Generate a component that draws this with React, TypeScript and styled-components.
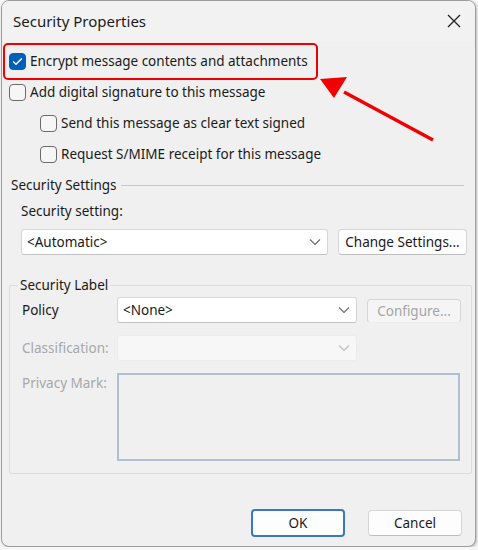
import React from 'react'
import styled, { createGlobalStyle } from 'styled-components'

const GlobalStyle = createGlobalStyle`
  html, body {
    margin: 0;
    padding: 0;
    background: #f7f7f7;
  }
  body {
    font-family: 'Noto Sans', 'Open Sans', sans-serif;
    font-size: 13.5px;
    color: #1a1a1a;
  }
`

const Chevron = () => (
  <svg width="12" height="8" viewBox="0 0 12 8">
    <path d="M1 1.5 L6 6.5 L11 1.5" fill="none" stroke="currentColor" strokeWidth="1.1" />
  </svg>
)

const Check = () => (
  <svg width="11" height="9" viewBox="0 0 11 9">
    <path d="M1.2 4.6 L4 7.3 L9.8 1.4" fill="none" stroke="#fff" strokeWidth="1.4" />
  </svg>
)

interface CheckRowProps {
  label: string
  checked?: boolean
  indent?: boolean
  highlighted?: boolean
}

const CheckRow: React.FC<CheckRowProps> = ({ label, checked, indent, highlighted }) => (
  <Row $indent={indent} $highlighted={highlighted}>
    <Box $checked={checked}>{checked && <Check />}</Box>
    <span>{label}</span>
  </Row>
)

const App: React.FC = () => {
  return (
    <>
      <GlobalStyle />
      <Window>
        <TitleBar>
          <Title>Security Properties</Title>
          <Close>
            <svg width="14" height="14" viewBox="0 0 14 14">
              <path d="M1 1 L13 13 M13 1 L1 13" stroke="#222" strokeWidth="1.3" />
            </svg>
          </Close>
        </TitleBar>
        <Body>
          <Checks>
            <CheckRow label="Encrypt message contents and attachments" checked highlighted />
            <CheckRow label="Add digital signature to this message" />
            <CheckRow label="Send this message as clear text signed" indent />
            <CheckRow label="Request S/MIME receipt for this message" indent />
          </Checks>

          <SectionHeader>
            <span>Security Settings</span>
            <Rule />
          </SectionHeader>
          <Indented>
            <FieldLabel>Security setting:</FieldLabel>
            <SettingRow>
              <Select $width={307}>
                <span>&lt;Automatic&gt;</span>
                <Chevron />
              </Select>
              <Button $width={129}>Change Settings...</Button>
            </SettingRow>
          </Indented>

          <GroupBox>
            <Legend>Security Label</Legend>
            <LabelGrid>
              <GridLabel>Policy</GridLabel>
              <Select $width={240}>
                <span>&lt;None&gt;</span>
                <Chevron />
              </Select>
              <Button $width={94} $small $disabled>Configure...</Button>

              <GridLabel $disabled>Classification:</GridLabel>
              <Select $width={240} $disabled>
                <span />
                <Chevron />
              </Select>
              <span />

              <GridLabel $disabled $top>Privacy Mark:</GridLabel>
              <TextArea />
            </LabelGrid>
          </GroupBox>

          <Footer>
            <Button $width={94} $primary>OK</Button>
            <Button $width={94}>Cancel</Button>
          </Footer>
        </Body>

        <Arrow width="120" height="70" viewBox="0 0 120 70">
          <path d="M113 64 L24 16" stroke="#f00000" strokeWidth="3.5" />
          <polygon points="0,3 27,1 14,22" fill="#f00000" />
        </Arrow>
      </Window>
    </>
  )
}

const Window = styled.div`
  position: relative;
  box-sizing: border-box;
  width: 475px;
  height: 547px;
  margin-left: 1px;
  background: #f0f0f0;
  border: 1px solid #9c9c9c;
  border-radius: 8px;
  box-shadow: 1px 1px 3px rgba(0, 0, 0, 0.25);
  overflow: hidden;
`

const TitleBar = styled.div`
  display: flex;
  align-items: center;
  justify-content: space-between;
  height: 40px;
  padding: 0 12px 0 11px;
  background: #f2f2f2;
`

const Title = styled.div`
  font-size: 15px;
  color: #1b1b1b;
`

const Close = styled.div`
  display: flex;
  padding-right: 2px;
`

const Body = styled.div`
  display: flex;
  flex-direction: column;
  padding: 2px 5px 0 7px;
`

const Checks = styled.div`
  display: flex;
  flex-direction: column;
  gap: 13px;
  margin-top: 9px;
`

const Row = styled.div<{ $indent?: boolean; $highlighted?: boolean }>`
  position: relative;
  display: flex;
  align-items: center;
  gap: 4px;
  height: 18px;
  padding-left: ${(p) => (p.$indent ? 31 : 0)}px;

  ${(p) =>
    p.$highlighted &&
    `
    &::after {
      content: '';
      position: absolute;
      left: -6px;
      top: -9px;
      width: 315px;
      height: 37px;
      box-sizing: border-box;
      border: 2px solid #f00000;
      border-radius: 5px;
    }
  `}
`

const Box = styled.div<{ $checked?: boolean }>`
  box-sizing: border-box;
  display: flex;
  align-items: center;
  justify-content: center;
  width: 17px;
  height: 17px;
  border-radius: 4px;
  border: 1px solid ${(p) => (p.$checked ? '#005fb8' : '#6b6b6b')};
  background: ${(p) => (p.$checked ? '#005fb8' : '#f6f6f6')};
`

const SectionHeader = styled.div`
  display: flex;
  align-items: center;
  gap: 4px;
  margin-top: 13px;
  padding-left: 2px;
  padding-right: 6px;
`

const Rule = styled.div`
  flex: 1;
  height: 1px;
  background: #c8c8c8;
`

const Indented = styled.div`
  display: flex;
  flex-direction: column;
  padding-left: 12px;
  margin-top: 8px;
`

const FieldLabel = styled.div`
  margin-bottom: 9px;
`

const SettingRow = styled.div`
  display: flex;
  gap: 10px;
`

const Select = styled.div<{ $width: number; $disabled?: boolean }>`
  box-sizing: border-box;
  display: flex;
  align-items: center;
  justify-content: space-between;
  width: ${(p) => p.$width}px;
  height: 26px;
  padding: 0 6px 0 5px;
  background: ${(p) => (p.$disabled ? '#f7f7f7' : '#ffffff')};
  border: 1px solid ${(p) => (p.$disabled ? '#ececec' : '#d6d6d6')};
  border-bottom-color: ${(p) => (p.$disabled ? '#ececec' : '#c2c2c2')};
  border-radius: 3px;
  color: ${(p) => (p.$disabled ? '#bdbdbd' : '#6a6a6a')};
  span {
    color: #1a1a1a;
  }
`

const Button = styled.div<{ $width: number; $primary?: boolean; $disabled?: boolean; $small?: boolean }>`
  box-sizing: border-box;
  display: flex;
  align-items: center;
  justify-content: center;
  width: ${(p) => p.$width}px;
  height: ${(p) => (p.$primary ? 28 : p.$small ? 24 : 26)}px;
  align-self: ${(p) => (p.$small ? 'end' : 'auto')};
  background: ${(p) => (p.$disabled ? '#f5f5f5' : '#fdfdfd')};
  border: ${(p) => (p.$primary ? '2px solid #3a78c4' : '1px solid #d6d6d6')};
  border-bottom-color: ${(p) => (p.$primary ? '#3a78c4' : p.$disabled ? '#ececec' : '#bdbdbd')};
  border-radius: 4px;
  color: ${(p) => (p.$disabled ? '#a5a5a5' : '#1a1a1a')};
`

const GroupBox = styled.fieldset`
  box-sizing: border-box;
  height: 198px;
  margin: 21px 0 0 0;
  padding: 0 10px 0 12px;
  border: 1px solid #dcdcdc;
  border-radius: 2px;
`

const Legend = styled.legend`
  padding: 0 2px;
  margin-left: -4px;
`

const LabelGrid = styled.div`
  display: grid;
  grid-template-columns: 85px 240px 94px;
  grid-template-rows: 26px 26px 88px;
  column-gap: 10px;
  row-gap: 12px;
  align-items: center;
  margin-top: 3px;
`

const GridLabel = styled.div<{ $disabled?: boolean; $top?: boolean }>`
  color: ${(p) => (p.$disabled ? '#a8a8a8' : '#1a1a1a')};
  align-self: ${(p) => (p.$top ? 'start' : 'center')};
  padding-top: ${(p) => (p.$top ? 1 : 0)}px;
`

const TextArea = styled.div`
  grid-column: 2 / span 2;
  box-sizing: border-box;
  height: 88px;
  width: 343px;
  border: 2px solid #b3bfd1;
  align-self: start;
`

const Footer = styled.div`
  display: flex;
  justify-content: flex-end;
  align-items: center;
  gap: 23px;
  padding-right: 8px;
  margin-top: 35px;
`

const Arrow = styled.svg`
  position: absolute;
  left: 318px;
  top: 75px;
`

export default App
